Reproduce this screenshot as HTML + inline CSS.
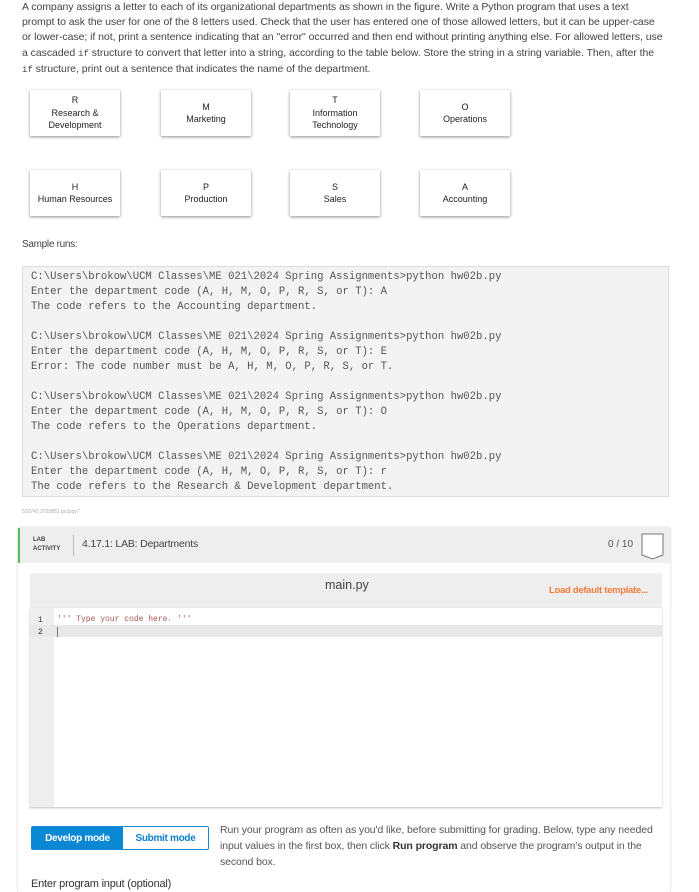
<!DOCTYPE html>
<html><head><meta charset="utf-8"><style>
body{margin:0;width:699px;height:892px;overflow:hidden;background:#fff;font-family:"Liberation Sans",sans-serif;color:#333;position:relative}
.a{position:absolute}
p.t{position:absolute;left:22px;top:0;width:670px;margin:0;font-size:10.5px;line-height:15.2px;color:#444;letter-spacing:-0.05px;white-space:nowrap}
code{font-family:"Liberation Mono",monospace;font-size:9px;letter-spacing:0}
.box{position:absolute;width:90px;height:46px;background:#fff;box-shadow:0 1px 3px rgba(0,0,0,.45);display:flex;align-items:center;justify-content:center;text-align:center;font-size:9px;line-height:12.5px;color:#222;font-family:"Liberation Sans",sans-serif}
pre{position:absolute;left:22px;top:266px;width:629px;height:224px;margin:0;padding:3px 8px 2px;background:#f3f3f3;border:1px solid #ddd;font-family:"Liberation Mono",monospace;font-size:10.6px;line-height:15px;color:#555}
</style></head><body>
<p class="t">A company assigns a letter to each of its organizational departments as shown in the figure. Write a Python program that uses a text<br>prompt to ask the user for one of the 8 letters used. Check that the user has entered one of those allowed letters, but it can be upper-case<br>or lower-case; if not, print a sentence indicating that an "error" occurred and then end without printing anything else. For allowed letters, use<br>a cascaded <code>if</code> structure to convert that letter into a string, according to the table below. Store the string in a string variable. Then, after the<br><code>if</code> structure, print out a sentence that indicates the name of the department.</p>
<div class="box" style="left:30px;top:90px">R<br>Research &amp;<br>Development</div>
<div class="box" style="left:161px;top:90px">M<br>Marketing</div>
<div class="box" style="left:290px;top:90px">T<br>Information<br>Technology</div>
<div class="box" style="left:420px;top:90px">O<br>Operations</div>
<div class="box" style="left:30px;top:170px">H<br>Human Resources</div>
<div class="box" style="left:161px;top:170px">P<br>Production</div>
<div class="box" style="left:290px;top:170px">S<br>Sales</div>
<div class="box" style="left:420px;top:170px">A<br>Accounting</div>
<div class="a" style="left:22px;top:239px;font-size:10px;color:#444;letter-spacing:-0.3px">Sample runs:</div>
<pre>C:\Users\brokow\UCM Classes\ME 021\2024 Spring Assignments>python hw02b.py
Enter the department code (A, H, M, O, P, R, S, or T): A
The code refers to the Accounting department.

C:\Users\brokow\UCM Classes\ME 021\2024 Spring Assignments>python hw02b.py
Enter the department code (A, H, M, O, P, R, S, or T): E
Error: The code number must be A, H, M, O, P, R, S, or T.

C:\Users\brokow\UCM Classes\ME 021\2024 Spring Assignments>python hw02b.py
Enter the department code (A, H, M, O, P, R, S, or T): O
The code refers to the Operations department.

C:\Users\brokow\UCM Classes\ME 021\2024 Spring Assignments>python hw02b.py
Enter the department code (A, H, M, O, P, R, S, or T): r
The code refers to the Research &amp; Development department.</pre>
<div class="a" style="left:22px;top:509px;font-size:5px;color:#aaa">532742.3703852.qx3zqy7</div>
<div class="a" style="left:18px;top:528px;width:652px;height:364px;box-shadow:0 0 3px rgba(0,0,0,.2);background:#fff"></div>
<div class="a" style="left:18px;top:528px;width:650px;height:35px;background:#eee;border-left:2px solid #5cb85c"></div>
<div class="a" style="left:33px;top:536px;font-size:6px;font-weight:bold;line-height:9px;color:#444">LAB<br>ACTIVITY</div>
<div class="a" style="left:73px;top:535px;width:1px;height:21px;background:#bbb"></div>
<div class="a" style="left:82px;top:538px;font-size:10.5px;color:#444;letter-spacing:-0.2px">4.17.1: LAB: Departments</div>
<div class="a" style="left:608px;top:539px;font-size:10px;color:#555">0 / 10</div>
<svg class="a" style="left:641px;top:533px" width="24" height="28"><path d="M1 1H22V22L11.5 26L1 22Z" fill="#fff" stroke="#777" stroke-width="1"/></svg>
<div class="a" style="left:30px;top:573px;width:632px;height:35px;background:#eee"></div>
<div class="a" style="left:325px;top:578px;font-size:12.5px;color:#444">main.py</div>
<div class="a" style="left:549px;top:585px;font-size:9.5px;font-weight:bold;color:#f07c3c;letter-spacing:-0.3px">Load default template...</div>
<div class="a" style="left:30px;top:608px;width:632px;height:199px;background:#fff;box-shadow:0 1px 2px rgba(0,0,0,.25)"></div>
<div class="a" style="left:30px;top:608px;width:24px;height:199px;background:#eee"></div>
<div class="a" style="left:30px;top:625px;width:632px;height:12px;background:#e8e8e8"></div>
<div class="a" style="left:38px;top:615px;font-family:'Liberation Mono',monospace;font-size:8px;line-height:12px;color:#333">1<br>2</div>
<div class="a" style="left:57px;top:615px;font-family:'Liberation Mono',monospace;font-size:8px;color:#a55">''' Type your code here. '''</div>
<div class="a" style="left:57px;top:627px;width:1px;height:10px;background:#777"></div>
<div class="a" style="left:31px;top:826px;width:176px;height:22px;border:1px solid #1a8ad6;border-radius:2px;display:flex;font-size:10px;font-weight:bold;letter-spacing:-0.3px">
<div style="width:91px;background:#0b88d4;color:#fff;display:flex;align-items:center;justify-content:center">Develop mode</div>
<div style="flex:1;color:#0b7ed0;display:flex;align-items:center;justify-content:center">Submit mode</div></div>
<div class="a" style="left:220px;top:822px;width:460px;font-size:10.5px;line-height:16px;color:#555;letter-spacing:-0.1px;white-space:nowrap">Run your program as often as you'd like, before submitting for grading. Below, type any needed<br>input values in the first box, then click <b style="color:#333">Run program</b> and observe the program's output in the<br>second box.</div>
<div class="a" style="left:31px;top:878px;font-size:11px;color:#333;letter-spacing:-0.2px">Enter program input (optional)</div>
</body></html>
